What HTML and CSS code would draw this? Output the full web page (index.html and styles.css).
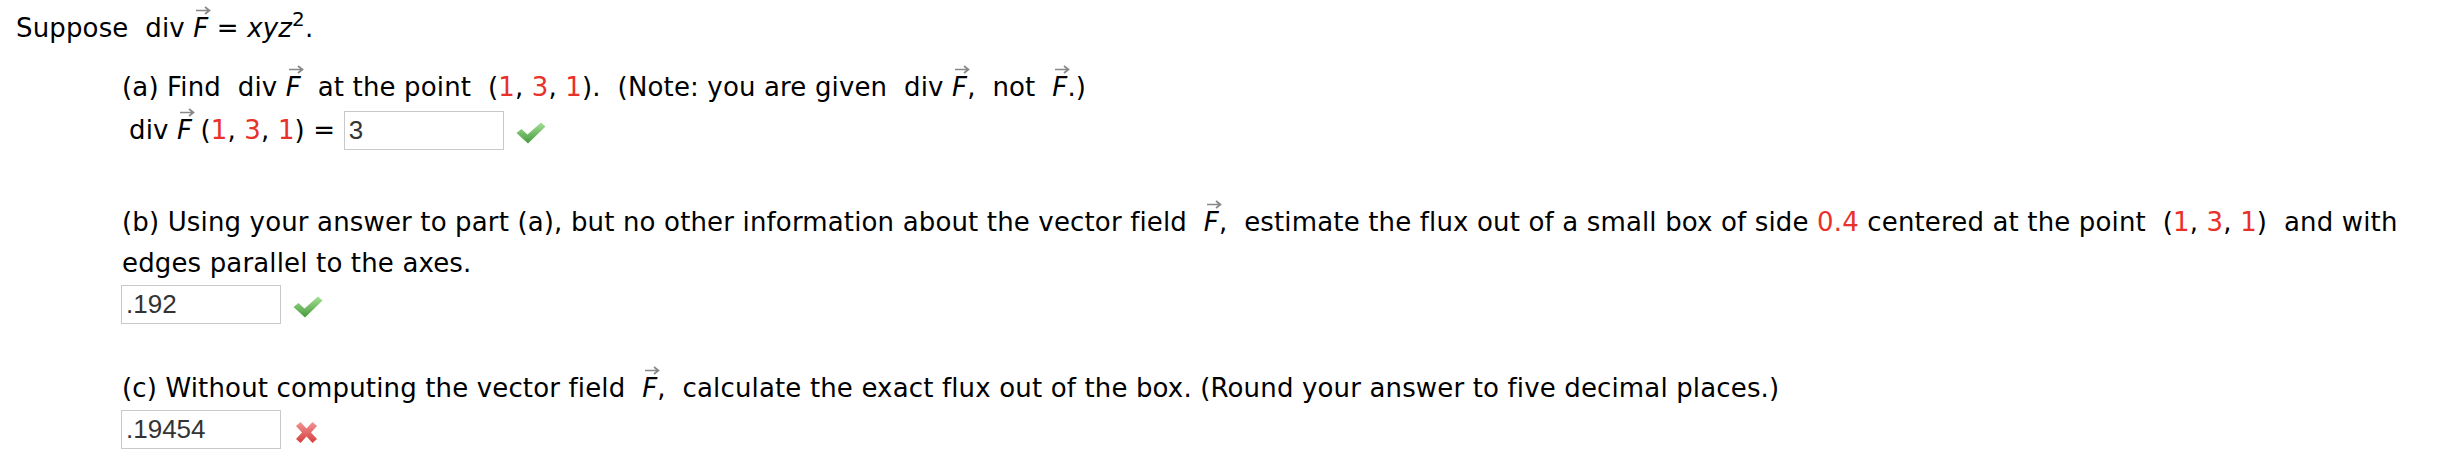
FILE: index.html
```html
<!DOCTYPE html>
<html lang="en">
<head>
    <meta charset="UTF-8">
    <title>Divergence question</title>
    <link rel="stylesheet" href="styles.css">
</head>
<body>
    <div class="question">
        <p class="intro">
            Suppose&nbsp; div <span class="vec">F<svg class="arrow" viewBox="0 0 16 9"><path d="M1 4.5H14.5M10 1L14.5 4.5L10 8"/></svg></span> = <i>xyz</i><sup>2</sup>.
        </p>

        <div class="part part-a">
            <p>
                (a) Find&nbsp; div <span class="vec">F<svg class="arrow" viewBox="0 0 16 9"><path d="M1 4.5H14.5M10 1L14.5 4.5L10 8"/></svg></span>&nbsp; at the point&nbsp; (<span class="num">1</span>, <span class="num">3</span>, <span class="num">1</span>).&nbsp; (Note: you are given&nbsp; div <span class="vec">F<svg class="arrow" viewBox="0 0 16 9"><path d="M1 4.5H14.5M10 1L14.5 4.5L10 8"/></svg></span>,&nbsp; not&nbsp; <span class="vec">F<svg class="arrow" viewBox="0 0 16 9"><path d="M1 4.5H14.5M10 1L14.5 4.5L10 8"/></svg></span>.)
            </p>
            <div class="answer answer-a">
                <span class="label">div <span class="vec">F<svg class="arrow" viewBox="0 0 16 9"><path d="M1 4.5H14.5M10 1L14.5 4.5L10 8"/></svg></span> (<span class="num">1</span>, <span class="num">3</span>, <span class="num">1</span>) =&nbsp;</span>
                <input class="box" type="text" value="3" readonly>
                <svg class="mark check" viewBox="0 0 30 22">
                    <defs>
                        <linearGradient id="g1" x1="0" y1="0" x2="0" y2="1">
                            <stop offset="0" stop-color="#a6e096"/>
                            <stop offset="1" stop-color="#469a3c"/>
                        </linearGradient>
                    </defs>
                    <path d="M0.5 11L5.5 7L11.5 12.5L25 0.5L29.5 4.5L12 21.5Z" fill="url(#g1)"/>
                </svg>
            </div>
        </div>

        <div class="part part-b">
            <p>
                (b) Using your answer to part (a), but no other information about the vector field&nbsp; <span class="vec">F<svg class="arrow" viewBox="0 0 16 9"><path d="M1 4.5H14.5M10 1L14.5 4.5L10 8"/></svg></span>,&nbsp; estimate the flux out of a small box of side <span class="num">0.4</span> centered at the point&nbsp; (<span class="num">1</span>, <span class="num">3</span>, <span class="num">1</span>)&nbsp; and with edges parallel to the axes.
            </p>
            <div class="answer">
                <input class="box" type="text" value=".192" readonly>
                <svg class="mark check" viewBox="0 0 30 22">
                    <defs>
                        <linearGradient id="g2" x1="0" y1="0" x2="0" y2="1">
                            <stop offset="0" stop-color="#a6e096"/>
                            <stop offset="1" stop-color="#469a3c"/>
                        </linearGradient>
                    </defs>
                    <path d="M0.5 11L5.5 7L11.5 12.5L25 0.5L29.5 4.5L12 21.5Z" fill="url(#g2)"/>
                </svg>
            </div>
        </div>

        <div class="part part-c">
            <p>
                (c) Without computing the vector field&nbsp; <span class="vec">F<svg class="arrow" viewBox="0 0 16 9"><path d="M1 4.5H14.5M10 1L14.5 4.5L10 8"/></svg></span>,&nbsp; calculate the exact flux out of the box. (Round your answer to five decimal places.)
            </p>
            <div class="answer">
                <input class="box" type="text" value=".19454" readonly>
                <svg class="mark cross" viewBox="0 0 27 25">
                    <defs>
                        <linearGradient id="g3" x1="0" y1="0" x2="0" y2="1">
                            <stop offset="0" stop-color="#f29393"/>
                            <stop offset="1" stop-color="#d63f3f"/>
                        </linearGradient>
                    </defs>
                    <path d="M3 6L7.5 2L13.5 8.5L19.5 2L24 6L18 12.5L24 19L19.5 23L13.5 16.5L7.5 23L3 19L9 12.5Z" fill="url(#g3)"/>
                </svg>
            </div>
        </div>
    </div>
</body>
</html>
```

FILE: styles.css
```css
body {
    margin: 0;
    background-color: #fff;
    color: #000;
    font-family: "DejaVu Sans", Verdana, sans-serif;
    font-size: 26px;
    letter-spacing: 0.15px;
    line-height: 41px;
}

p {
    margin: 0;
}

.question {
    padding: 8px 16px;
}

.part {
    margin-left: 106px;
}

.part-a {
    margin-top: 18px;
}

.part-b {
    margin-top: 50px;
}

.part-c {
    margin-top: 43px;
}

.num {
    color: #e8312a;
}

i {
    font-style: italic;
}

sup {
    font-size: 20px;
    line-height: 0;
    vertical-align: 11px;
}

.vec {
    position: relative;
    font-style: italic;
}

.arrow {
    position: absolute;
    left: 2px;
    top: -7px;
    width: 16px;
    height: 9px;
    fill: none;
    stroke: #888;
    stroke-width: 1.7;
}

.answer {
    display: flex;
    align-items: center;
    height: 41px;
}

.answer-a {
    height: 44px;
}

.label {
    padding-left: 7px;
}

.box {
    box-sizing: border-box;
    width: 160px;
    height: 39px;
    margin: 0 0 0 -1px;
    padding: 0 4px;
    border: 1px solid #c9c9c9;
    font-family: "Liberation Sans", Arial, sans-serif;
    font-size: 26px;
    color: #333;
    outline: none;
}

.answer-a .box {
    margin-left: 0;
    width: 160px;
}

.mark {
    margin-left: 12px;
    margin-top: 5px;
}

.check {
    width: 30px;
    height: 22px;
}

.cross {
    width: 27px;
    height: 25px;
}
```
